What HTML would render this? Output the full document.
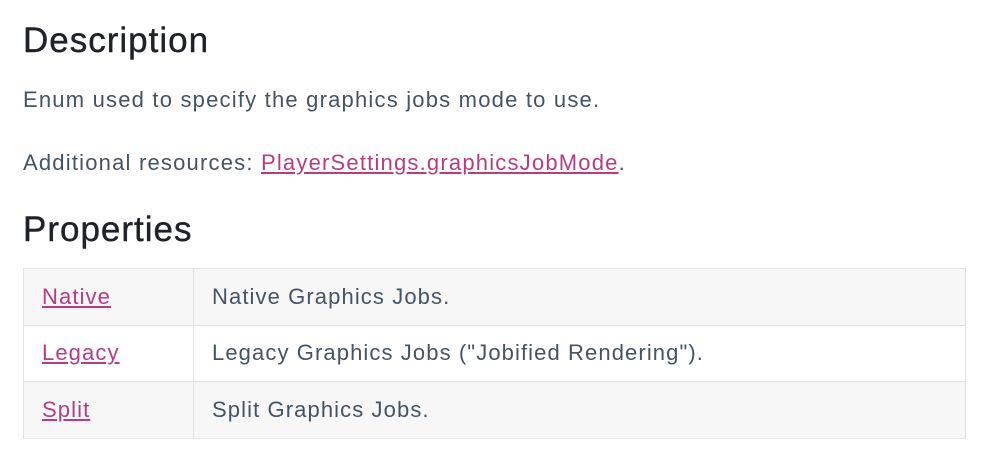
<!DOCTYPE html>
<html><head><style>
body{margin:0;background:#fff;font-family:"Liberation Sans",Arial,sans-serif;width:996px;height:469px;overflow:hidden}
h2{position:absolute;left:23px;margin:0;font-size:35px;font-weight:400;color:#1f2328;line-height:1;letter-spacing:1px;-webkit-text-stroke:0.4px #1f2328}
p{position:absolute;left:23px;margin:0;font-size:22px;color:#455463;line-height:1;letter-spacing:1.2px}
a{color:#b83c82;text-decoration:underline}
table{position:absolute;left:23px;top:268px;width:943px;border-collapse:collapse;font-size:22px;color:#455463;letter-spacing:1.1px}
td{border:1px solid #e3e3e3;height:55.6px;padding:0 0 0 18px}
tr:nth-child(odd){background:#f7f7f7}
td.n{width:151px}
</style></head><body>
<h2 style="top:23px">Description</h2>
<p style="top:89px">Enum used to specify the graphics jobs mode to use.</p>
<p style="top:152px">Additional resources: <a>PlayerSettings.graphicsJobMode</a>.</p>
<h2 style="top:212px">Properties</h2>
<table>
<tr><td class="n"><a>Native</a></td><td>Native Graphics Jobs.</td></tr>
<tr><td class="n"><a>Legacy</a></td><td>Legacy Graphics Jobs ("Jobified Rendering").</td></tr>
<tr><td class="n"><a>Split</a></td><td>Split Graphics Jobs.</td></tr>
</table>
</body></html>
